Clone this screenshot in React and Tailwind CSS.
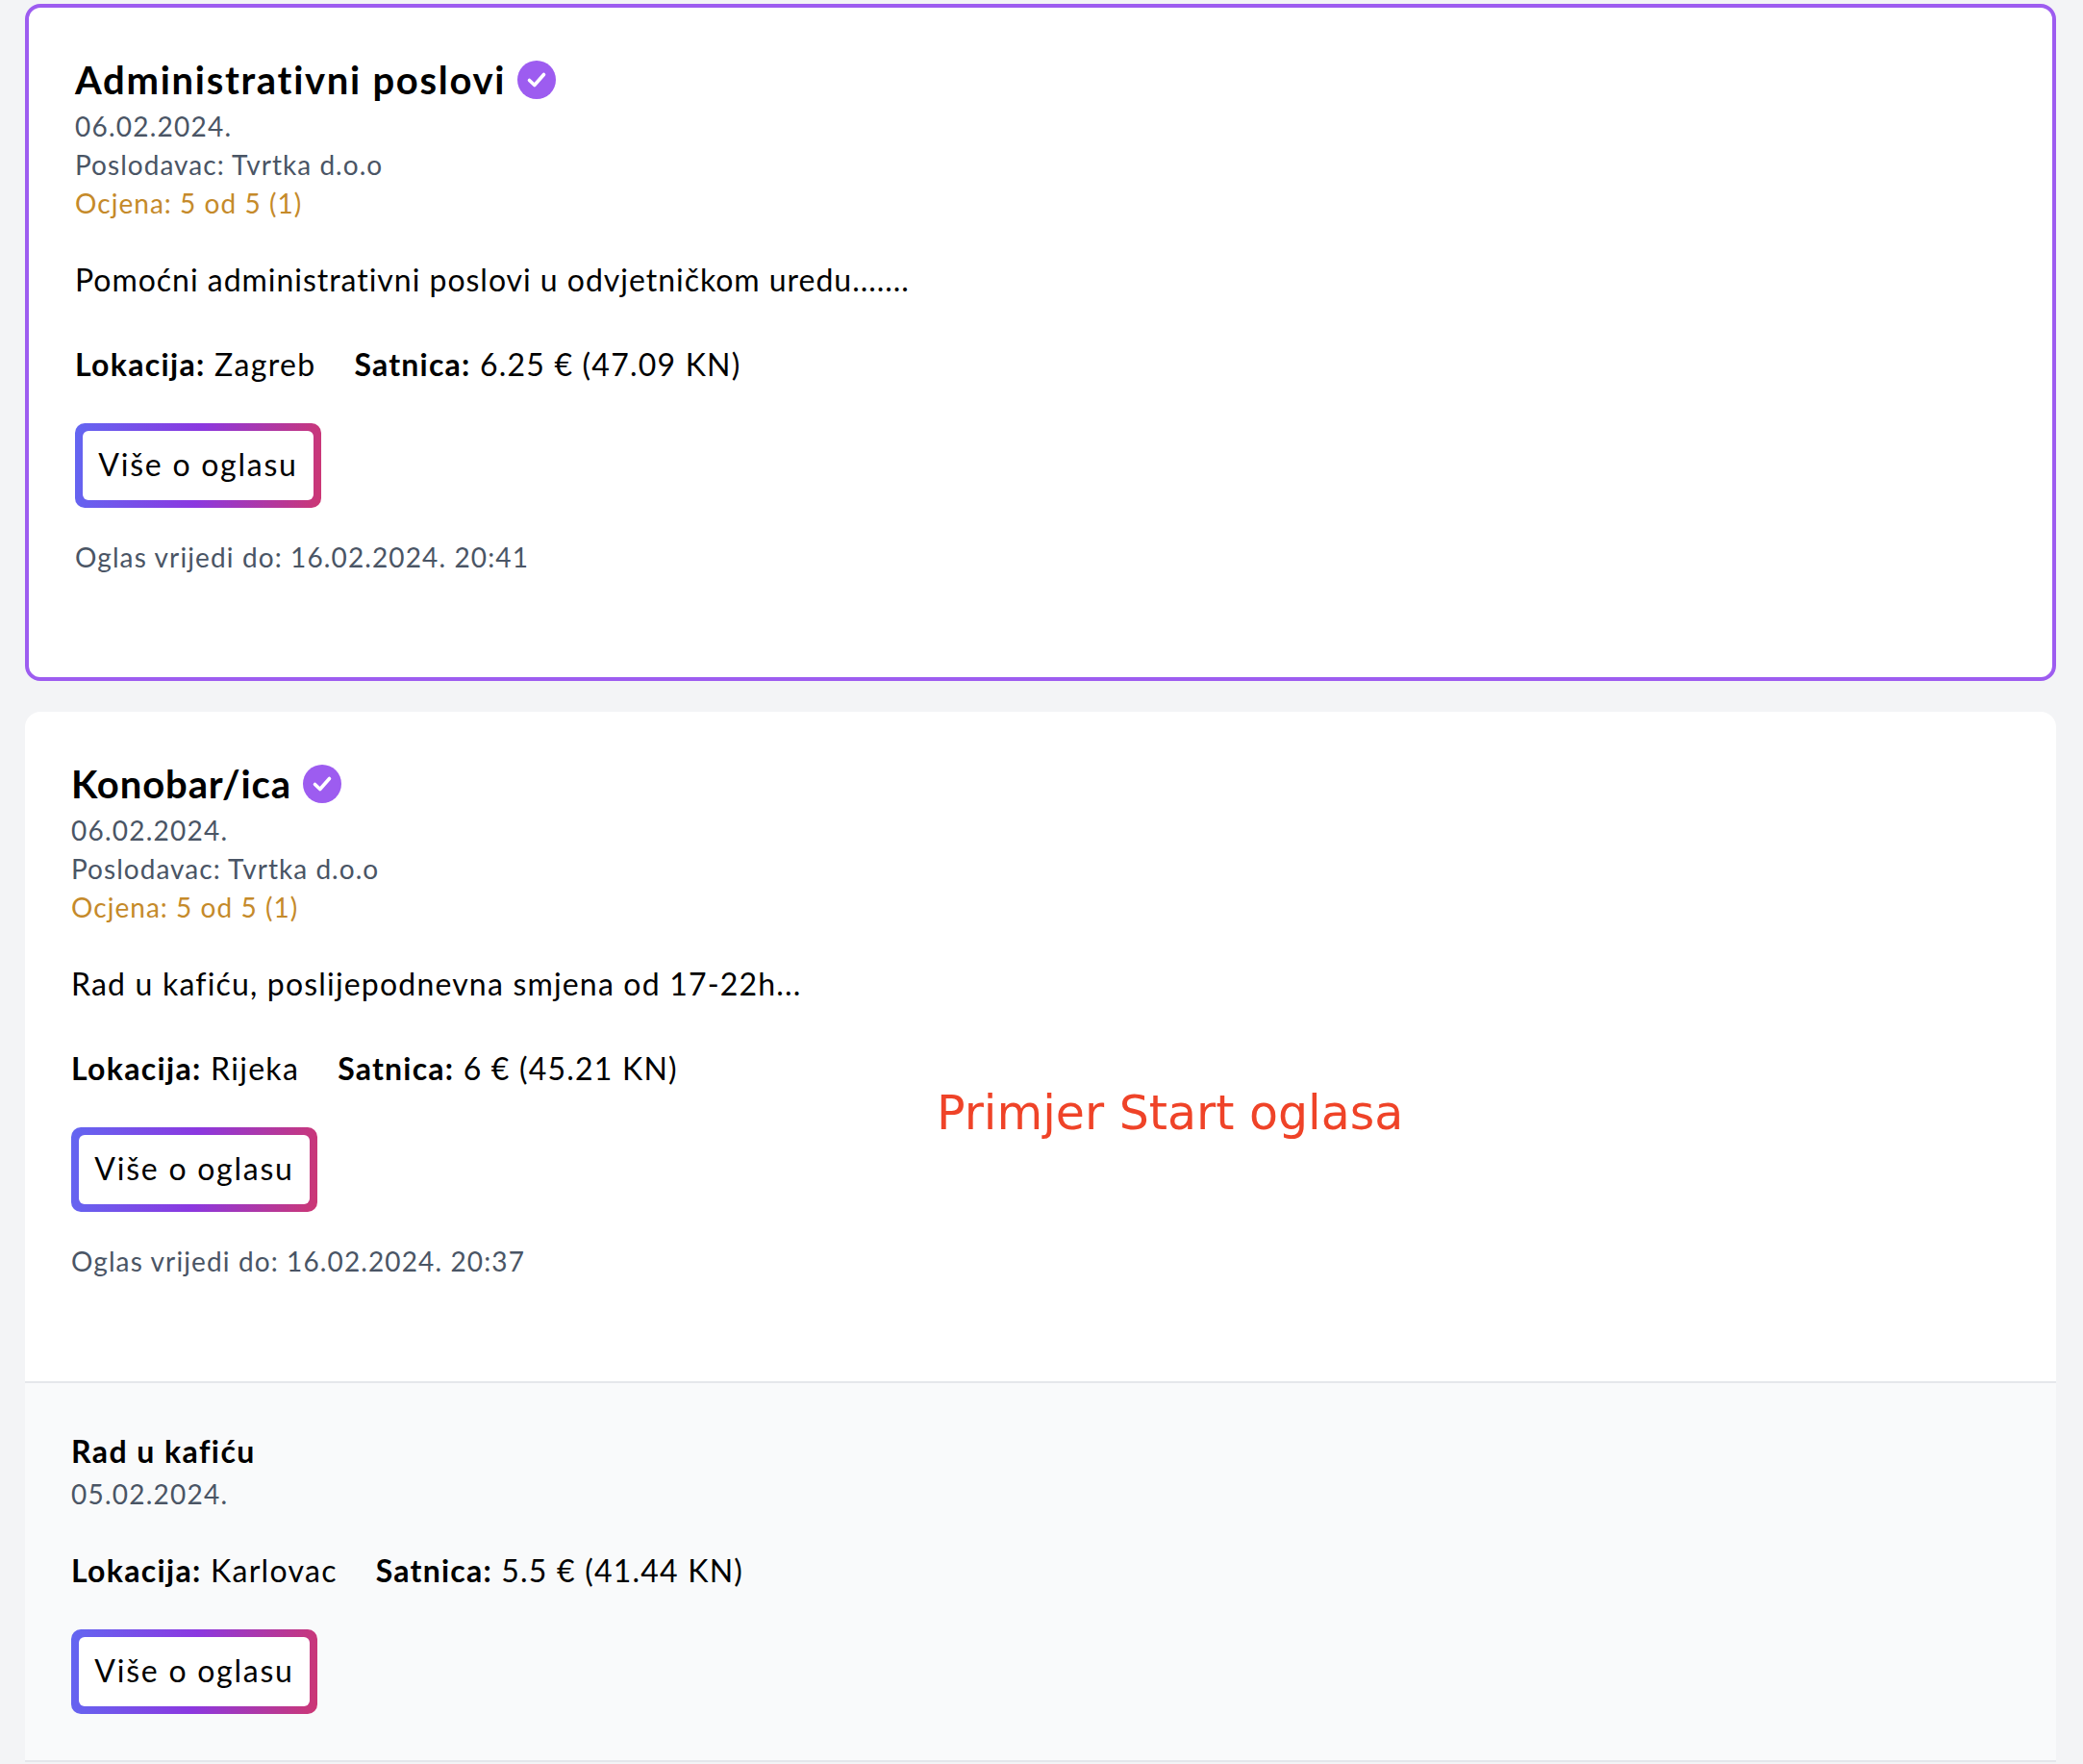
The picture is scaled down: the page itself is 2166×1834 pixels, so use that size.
const sans = "font-['Lato','Noto_Sans',sans-serif]";

function Badge() {
  return (
    <svg viewBox="0 0 40 40" className="w-10 h-10 shrink-0 ml-3" aria-hidden="true">
      <circle cx="20" cy="20" r="20" fill="#9d5cf0" />
      <path d="M12.5 20.5 L17.8 25.5 L27.5 14.5" fill="none" stroke="#fff" strokeWidth="3.6" strokeLinecap="round" strokeLinejoin="round" />
    </svg>
  );
}

function MoreButton() {
  return (
    <a className="block w-64 h-[88px] rounded-[10px] p-2 bg-[linear-gradient(95deg,#6366f1_0%,#8b38e0_50%,#cc3774_100%)]">
      <span className="flex h-full w-full items-center justify-center rounded-md bg-white pb-0.5 text-[32px] leading-[48px] tracking-[0.055em] text-black">
        Više o oglasu
      </span>
    </a>
  );
}

function Facts({ place, rate, className }) {
  return (
    <p className={`flex text-[32px] leading-[48px] text-black ${className}`}>
      <span className="mr-10 tracking-[0.041em]"><strong className="font-bold">Lokacija:</strong> {place}</span>
      <span className="tracking-[0.038em]"><strong className="font-bold">Satnica:</strong> {rate}</span>
    </p>
  );
}

function FullAd({ title, titleTracking, date, text, textTracking, place, rate, until }) {
  return (
    <div>
      <div className="flex items-center h-14">
        <h2 className={`text-[40px] leading-[56px] font-bold text-black ${titleTracking}`}>{title}</h2>
        <Badge />
      </div>
      <p className="text-[28px] leading-10 tracking-[0.044em] text-gray-600">{date}</p>
      <p className="text-[28px] leading-10 tracking-[0.037em] text-gray-600">Poslodavac: Tvrtka d.o.o</p>
      <p className="text-[28px] leading-10 tracking-[0.037em] text-[#c58a2a]">Ocjena: 5 od 5 (1)</p>
      <p className={`mt-9 text-[32px] leading-[48px] text-black ${textTracking}`}>{text}</p>
      <Facts place={place} rate={rate} className="mt-10" />
      <div className="mt-[37px]"><MoreButton /></div>
      <p className="mt-[31px] text-[28px] leading-10 tracking-[0.04em] text-gray-600">{until}</p>
    </div>
  );
}

export default function App() {
  return (
    <div className={`${sans} h-[1834px] overflow-hidden bg-gray-100 pt-1 pl-[26px] pr-7`}>
      <section className="h-[704px] rounded-2xl border-4 border-[#9d5cf0] bg-white px-12 pt-[47px]">
        <FullAd
          title="Administrativni poslovi"
          titleTracking="tracking-[0.0425em]"
          date="06.02.2024."
          text="Pomoćni administrativni poslovi u odvjetničkom uredu......."
          textTracking="tracking-[0.0304em]"
          place="Zagreb"
          rate="6.25 € (47.09 KN)"
          until="Oglas vrijedi do: 16.02.2024. 20:41"
        />
      </section>
      <section className="relative mt-8 rounded-t-2xl bg-white">
        <div className="h-[696px] px-12 pt-[47px]">
          <FullAd
            title="Konobar/ica"
            titleTracking="tracking-[0.0225em]"
            date="06.02.2024."
            text="Rad u kafiću, poslijepodnevna smjena od 17-22h..."
            textTracking="tracking-[0.037em]"
            place="Rijeka"
            rate="6 € (45.21 KN)"
            until="Oglas vrijedi do: 16.02.2024. 20:37"
          />
        </div>
        <div className="border-y-2 border-gray-200 bg-gray-50 px-12 pt-[47px] pb-12">
          <h3 className="text-[32px] leading-[48px] font-bold tracking-[0.045em] text-black">Rad u kafiću</h3>
          <p className="text-[28px] leading-10 tracking-[0.044em] text-gray-600">05.02.2024.</p>
          <Facts place="Karlovac" rate="5.5 € (41.44 KN)" className="mt-9" />
          <div className="mt-[37px]"><MoreButton /></div>
        </div>
        <p className="absolute left-[948px] top-[382px] font-['DejaVu_Sans',sans-serif] text-[49px] leading-[72px] text-[#ef4328]">
          Primjer Start oglasa
        </p>
      </section>
    </div>
  );
}
